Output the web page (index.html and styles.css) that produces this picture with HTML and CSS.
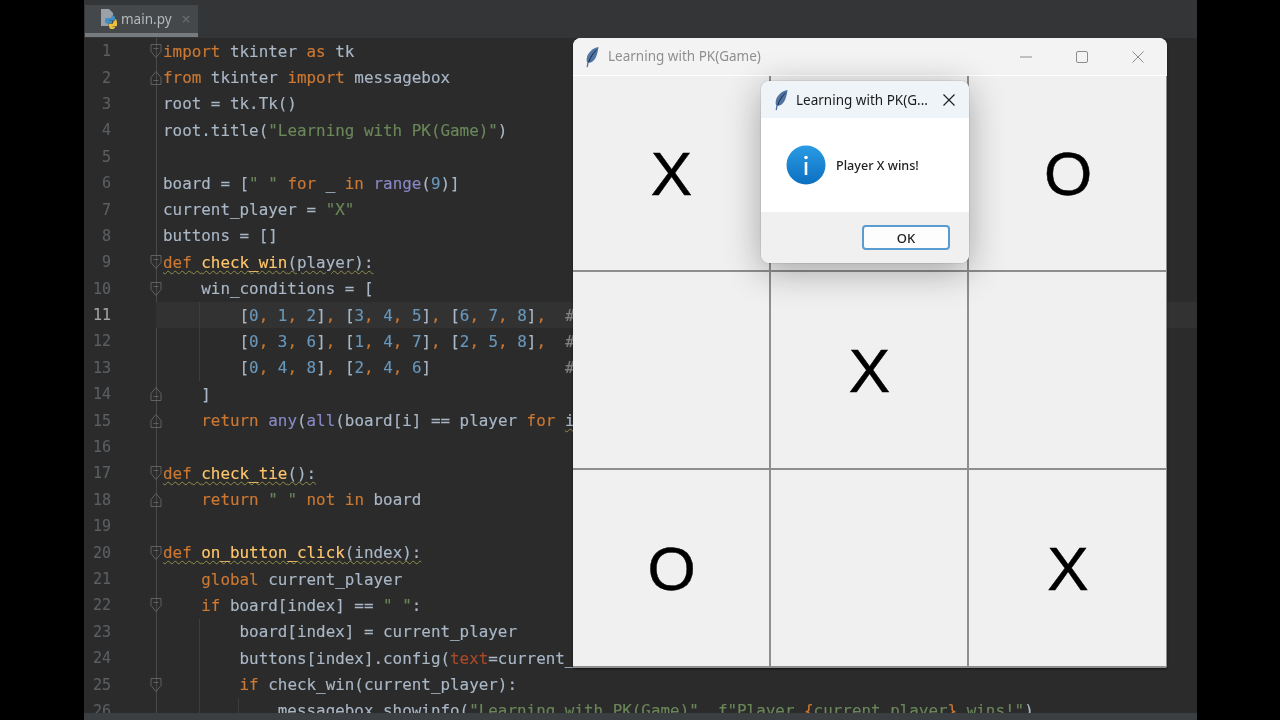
FILE: index.html
```html
<!DOCTYPE html>
<html lang="en">
<head>
    <meta charset="UTF-8">
    <meta name="viewport" content="width=device-width, initial-scale=1.0">
    <title>main.py</title>
    <link rel="stylesheet" href="styles.css">
</head>
<body>

<svg class="defs" width="0" height="0">
    <symbol id="foldDown" viewBox="0 0 12 16"><path d="M1 1.500h10v7L6 14.500 1 8.500z M3.500 5.500h5" fill="none" stroke="#606060" stroke-width="1"/></symbol>
    <symbol id="foldUp" viewBox="0 0 12 16"><path d="M1 14.500h10v-7L6 1.500 1 7.500z M3.500 10.500h5" fill="none" stroke="#606060" stroke-width="1"/></symbol>
    <symbol id="feather" viewBox="0 0 16 22"><path d="M14.500 1C9 2 4 6 2.800 12c-.3 1.800-.1 3.200.5 4.300L2.600 21l1.300.2.700-4.200c3.500-.4 6.500-3 8-7.500 1-3 1.700-6 1.900-8.500z" fill="#4f74a3"/><path d="M12.500 4C9 7 6.500 11 4.800 16" fill="none" stroke="#1d2a3d" stroke-width="1"/></symbol>
</svg>

<div class="screen">
    <div class="editor">
        <!-- Tabs -->
        <div class="tabbar">
            <div class="tab">
                <svg class="py-icon" width="17" height="20" viewBox="0 0 17 20">
                    <path d="M1 0h8l4 4v5H8v8H1z" fill="#9aa1a8"/>
                    <path d="M5 11c0-1.500 1-2 2.500-2H10c1 0 1.500-.5 1.500-1.500V6.500h1.500c1.500 0 2 1 2 2.500v1c0 1.200-.7 1.500-1.800 1.500H9v.5h3v1.200c0 .8-.8 1.300-2 1.300H7.500C6 14.500 5 14 5 13z" fill="#3f8fc4"/>
                    <path d="M16.500 11.500c0-.5 0-1-.2-1.200h-1c-.3 1.500-1 2-2 2v1c0 1-.6 1.500-1.500 1.500H8.500v1.500c0 .5.3 1 .8 1.200v.7c0 1 1 1.800 2.700 1.800s3-.7 3-1.800V18h-2.500v-.5h2.500c1.500 0 2.500-.8 2.500-2.500z" fill="#e9c13f"/>
                </svg>
                <span class="tab-name">main.py</span>
                <span class="tab-close">&times;</span>
            </div>
        </div>

        <!-- Code -->
        <div class="code">
            <div class="row"><span class="num">1</span><svg class="fold"><use href="#foldDown"/></svg><span class="src"><b class="k">import</b> tkinter <b class="k">as</b> tk</span></div>
            <div class="row"><span class="num">2</span><svg class="fold"><use href="#foldUp"/></svg><span class="src"><b class="k">from</b> tkinter <b class="k">import</b> messagebox</span></div>
            <div class="row"><span class="num">3</span><span class="nofold"></span><span class="src">root = tk.Tk()</span></div>
            <div class="row"><span class="num">4</span><span class="nofold"></span><span class="src">root.title(<b class="s">"Learning with PK(Game)"</b>)</span></div>
            <div class="row"><span class="num">5</span><span class="nofold"></span><span class="src"></span></div>
            <div class="row"><span class="num">6</span><span class="nofold"></span><span class="src">board = [<b class="s">" "</b> <b class="k">for</b> _ <b class="k">in</b> <b class="b">range</b>(<b class="n">9</b>)]</span></div>
            <div class="row"><span class="num">7</span><span class="nofold"></span><span class="src">current_player = <b class="s">"X"</b></span></div>
            <div class="row"><span class="num">8</span><span class="nofold"></span><span class="src">buttons = []</span></div>
            <div class="row"><span class="num">9</span><svg class="fold"><use href="#foldDown"/></svg><span class="src wavy"><b class="k">def</b> <b class="f">check_win</b>(player):</span></div>
            <div class="row"><span class="num">10</span><svg class="fold"><use href="#foldDown"/></svg><span class="src">    win_conditions = [</span></div>
            <div class="row current guide1"><span class="num">11</span><span class="nofold"></span><span class="src">        [<b class="n">0</b><b class="k">,</b> <b class="n">1</b><b class="k">,</b> <b class="n">2</b>]<b class="k">,</b> [<b class="n">3</b><b class="k">,</b> <b class="n">4</b><b class="k">,</b> <b class="n">5</b>]<b class="k">,</b> [<b class="n">6</b><b class="k">,</b> <b class="n">7</b><b class="k">,</b> <b class="n">8</b>]<b class="k">,</b>  <b class="c"># Rows</b></span></div>
            <div class="row guide1"><span class="num">12</span><span class="nofold"></span><span class="src">        [<b class="n">0</b><b class="k">,</b> <b class="n">3</b><b class="k">,</b> <b class="n">6</b>]<b class="k">,</b> [<b class="n">1</b><b class="k">,</b> <b class="n">4</b><b class="k">,</b> <b class="n">7</b>]<b class="k">,</b> [<b class="n">2</b><b class="k">,</b> <b class="n">5</b><b class="k">,</b> <b class="n">8</b>]<b class="k">,</b>  <b class="c"># Columns</b></span></div>
            <div class="row guide1"><span class="num">13</span><span class="nofold"></span><span class="src">        [<b class="n">0</b><b class="k">,</b> <b class="n">4</b><b class="k">,</b> <b class="n">8</b>]<b class="k">,</b> [<b class="n">2</b><b class="k">,</b> <b class="n">4</b><b class="k">,</b> <b class="n">6</b>]              <b class="c"># Diagonals</b></span></div>
            <div class="row"><span class="num">14</span><svg class="fold"><use href="#foldUp"/></svg><span class="src">    ]</span></div>
            <div class="row"><span class="num">15</span><svg class="fold"><use href="#foldUp"/></svg><span class="src">    <b class="k">return</b> <b class="b">any</b>(<b class="b">all</b>(board[i] == player <b class="k">for</b> <span class="wavy">i</span> <b class="k">in</b> combo) <b class="k">for</b> combo <b class="k">in</b> win_conditions)</span></div>
            <div class="row"><span class="num">16</span><span class="nofold"></span><span class="src"></span></div>
            <div class="row"><span class="num">17</span><svg class="fold"><use href="#foldDown"/></svg><span class="src wavy"><b class="k">def</b> <b class="f">check_tie</b>():</span></div>
            <div class="row"><span class="num">18</span><svg class="fold"><use href="#foldUp"/></svg><span class="src">    <b class="k">return</b> <b class="s">" "</b> <b class="k">not in</b> board</span></div>
            <div class="row"><span class="num">19</span><span class="nofold"></span><span class="src"></span></div>
            <div class="row"><span class="num">20</span><svg class="fold"><use href="#foldDown"/></svg><span class="src wavy"><b class="k">def</b> <b class="f">on_button_click</b>(index):</span></div>
            <div class="row"><span class="num">21</span><span class="nofold"></span><span class="src">    <b class="k">global</b> current_player</span></div>
            <div class="row"><span class="num">22</span><svg class="fold"><use href="#foldDown"/></svg><span class="src">    <b class="k">if</b> board[index] == <b class="s">" "</b>:</span></div>
            <div class="row guide1"><span class="num">23</span><span class="nofold"></span><span class="src">        board[index] = current_player</span></div>
            <div class="row guide1"><span class="num">24</span><span class="nofold"></span><span class="src">        buttons[index].config(<b class="p">text</b>=current_player)</span></div>
            <div class="row guide1"><span class="num">25</span><svg class="fold"><use href="#foldDown"/></svg><span class="src">        <b class="k">if</b> check_win(current_player):</span></div>
            <div class="row guide1 guide2"><span class="num">26</span><span class="nofold"></span><span class="src">            messagebox.showinfo(<b class="s">"Learning with PK(Game)"</b><b class="k">,</b> <b class="s">f"Player </b><b class="k">{</b><b class="s">current_player</b><b class="k">}</b><b class="s"> wins!"</b>)</span></div>
        </div>

        <div class="statusbar"></div>
    </div>

    <!-- Tic tac toe window -->
    <div class="window">
        <div class="titlebar">
            <svg class="feather" width="16" height="22"><use href="#feather"/></svg>
            <span class="win-title">Learning with PK(Game)</span>
            <div class="win-controls">
                <svg width="12" height="12" viewBox="0 0 12 12"><path d="M0 6h12" stroke="#8c8c8c"/></svg>
                <svg width="12" height="12" viewBox="0 0 12 12"><rect x=".5" y=".5" width="11" height="11" rx="1.500" fill="none" stroke="#8c8c8c"/></svg>
                <svg width="12" height="12" viewBox="0 0 12 12"><path d="M.5.5l11 11M11.500.5l-11 11" stroke="#8c8c8c"/></svg>
            </div>
        </div>
        <div class="board">
            <div class="cell">X</div>
            <div class="cell"></div>
            <div class="cell">O</div>
            <div class="cell"></div>
            <div class="cell">X</div>
            <div class="cell"></div>
            <div class="cell">O</div>
            <div class="cell"></div>
            <div class="cell">X</div>
        </div>
    </div>

    <!-- Message box -->
    <div class="dialog">
        <div class="dialog-title">
            <svg class="feather" width="16" height="22"><use href="#feather"/></svg>
            <span class="dialog-name">Learning with PK(G...</span>
            <svg width="12" height="12" viewBox="0 0 12 12"><path d="M.5.5l11 11M11.500.5l-11 11" stroke="#222" stroke-width="1.200"/></svg>
        </div>
        <div class="dialog-body">
            <svg width="40" height="40" viewBox="0 0 40 40">
                <defs>
                    <linearGradient id="infoBlue" x1="0" y1="0" x2="0" y2="1">
                        <stop offset="0" stop-color="#2a9be4"/>
                        <stop offset="1" stop-color="#0c6fc0"/>
                    </linearGradient>
                </defs>
                <circle cx="20" cy="20" r="19.500" fill="url(#infoBlue)"/>
                <rect x="18.700" y="17" width="2.600" height="13" fill="#fff"/>
                <circle cx="20" cy="12.500" r="1.800" fill="#fff"/>
            </svg>
            <span class="message">Player X wins!</span>
        </div>
        <div class="dialog-footer">
            <button class="ok-btn">OK</button>
        </div>
    </div>
</div>

</body>
</html>
```

FILE: styles.css
```css
/* General Page Styling */
html, body {
    margin: 0;
    height: 100%;
    overflow: hidden;
    background: #000;
}

.defs {
    display: block;
    height: 0;
}

.screen {
    position: relative;
    width: 1280px;
    height: 720px;
    padding: 0 83px 0 84px;
    box-sizing: border-box;
    filter: blur(0.35px);
}

/* Editor */
.editor {
    display: flex;
    flex-direction: column;
    height: 720px;
    background: #2b2b2b;
    overflow: hidden;
}

.tabbar {
    display: flex;
    flex: none;
    height: 33px;
    padding: 5px 0 0 1px;
    background: #333537;
}

.tab {
    display: flex;
    align-items: center;
    gap: 4px;
    width: 113px;
    height: 32px;
    padding: 0 0 0 15px;
    box-sizing: border-box;
    background: #45484a;
    border-bottom: 4px solid #767b80;
    font-family: "Noto Sans", sans-serif;
    font-size: 13.5px;
}

.tab-name {
    color: #b3b8bc;
}

.tab-close {
    margin-left: 6px;
    color: #6b6e70;
    font-size: 16px;
}

.py-icon {
    flex: none;
}

/* Code Rows */
.code {
    flex: 1;
    min-height: 0;
    overflow: hidden;
    font-family: "DejaVu Sans Mono", monospace;
    font-size: 15.9px;
    color: #a9b7c6;
    -webkit-text-stroke: 0.15px;
    background: linear-gradient(#4a4a4a, #4a4a4a) no-repeat 72px 0 / 1px 100%;
}

.row {
    display: flex;
    align-items: center;
    height: 26.4px;
    white-space: pre;
}

.row.current {
    background-color: #323232;
    background-image: linear-gradient(90deg, #2b2b2b 72px, transparent 72px);
}

.guide1 {
    background-image: linear-gradient(#3d3d3d, #3d3d3d);
    background-repeat: no-repeat;
    background-position: 115px 0;
    background-size: 1px 100%;
}

.row.current.guide1 {
    background-image: linear-gradient(#3d3d3d, #3d3d3d), linear-gradient(90deg, #2b2b2b 72px, transparent 72px);
    background-size: 1px 100%, 100% 100%;
    background-position: 115px 0, 0 0;
}

.guide1.guide2 {
    background-image: linear-gradient(#3d3d3d, #3d3d3d), linear-gradient(#3d3d3d, #3d3d3d);
    background-position: 115px 0, 154px 0;
    background-size: 1px 100%, 1px 100%;
}

.num {
    flex: none;
    width: 27px;
    text-align: right;
    color: #5b5f62;
    font-size: 15px;
}

.current .num {
    color: #a4a3a3;
}

.fold, .nofold {
    flex: none;
    width: 12px;
    height: 16px;
    margin-left: 39px;
}

.src {
    margin-left: 1px;
}

.src b {
    font-weight: normal;
}

.k { color: #cc7832; }
.s { color: #6a8759; }
.n { color: #6897bb; }
.b { color: #8888c6; }
.f { color: #ffc66d; }
.p { color: #aa4926; }
.c { color: #808080; }

.wavy {
    text-decoration: underline wavy #8f8f4a 1px;
    text-underline-offset: 2px;
}

.statusbar {
    flex: none;
    height: 7px;
    background: #3c3f41;
}

/* Game Window */
.window {
    position: absolute;
    left: 573px;
    top: 38px;
    width: 594px;
    height: 630px;
    display: flex;
    flex-direction: column;
    background: #efefef;
    border-radius: 8px 8px 3px 3px;
    box-shadow: 0 1px 2px rgba(0, 0, 0, 0.6);
    overflow: hidden;
}

.titlebar {
    display: flex;
    flex: none;
    align-items: center;
    height: 38px;
    padding-left: 11px;
    background: #f3f3f3;
    border-bottom: 1px solid #fff;
    box-sizing: border-box;
}

.win-title {
    margin: 0 0 1px 8px;
    color: #8f8f8f;
    font-family: "Noto Sans", sans-serif;
    font-size: 13.5px;
}

.win-controls {
    display: flex;
    gap: 44px;
    margin-left: auto;
    padding-right: 23px;
}

.board {
    display: grid;
    flex: 1;
    grid-template-columns: 196px 196px 197px;
    grid-template-rows: 194px 196px 196px;
    gap: 2px;
    padding: 0 1px 1px 0;
    background: #8e8e8e;
}

.cell {
    display: flex;
    align-items: center;
    justify-content: center;
    padding-left: 1px;
    background: #f0f0f0;
    color: #000;
    font-family: "Liberation Sans", sans-serif;
    font-size: 62px;
    -webkit-text-stroke: 0.5px #000;
}

/* Message Box */
.dialog {
    position: absolute;
    left: 761px;
    top: 81px;
    width: 208px;
    height: 182px;
    display: flex;
    flex-direction: column;
    border-radius: 8px;
    overflow: hidden;
    background: #fff;
    box-shadow: 0 8px 36px rgba(0, 0, 0, 0.32), 0 0 1px rgba(0, 0, 0, 0.6);
}

.dialog-title {
    display: flex;
    flex: none;
    align-items: center;
    height: 37px;
    padding: 0 14px 0 12px;
    box-sizing: border-box;
    background: #eff4f9;
    color: #1c1c1c;
    font-family: "Noto Sans", sans-serif;
    font-size: 13.5px;
}

.dialog-name {
    flex: 1;
    margin-left: 7px;
    white-space: nowrap;
}

.dialog-body {
    display: flex;
    flex: 1;
    align-items: center;
    gap: 10px;
    padding: 0 25px;
}

.message {
    margin-top: 1px;
    color: #222;
    font-family: "Noto Sans", sans-serif;
    font-size: 12.6px;
    font-weight: 500;
}

.dialog-footer {
    display: flex;
    flex: none;
    align-items: center;
    justify-content: flex-end;
    height: 51px;
    padding-right: 19px;
    box-sizing: border-box;
    background: #f0f0f0;
}

.ok-btn {
    width: 88px;
    height: 25px;
    padding: 0;
    background: #fdfdfd;
    border: 2px solid #5a9bd0;
    border-radius: 4px;
    color: #1c1c1c;
    font-family: "Noto Sans", sans-serif;
    font-size: 13px;
    font-weight: 500;
}
```
